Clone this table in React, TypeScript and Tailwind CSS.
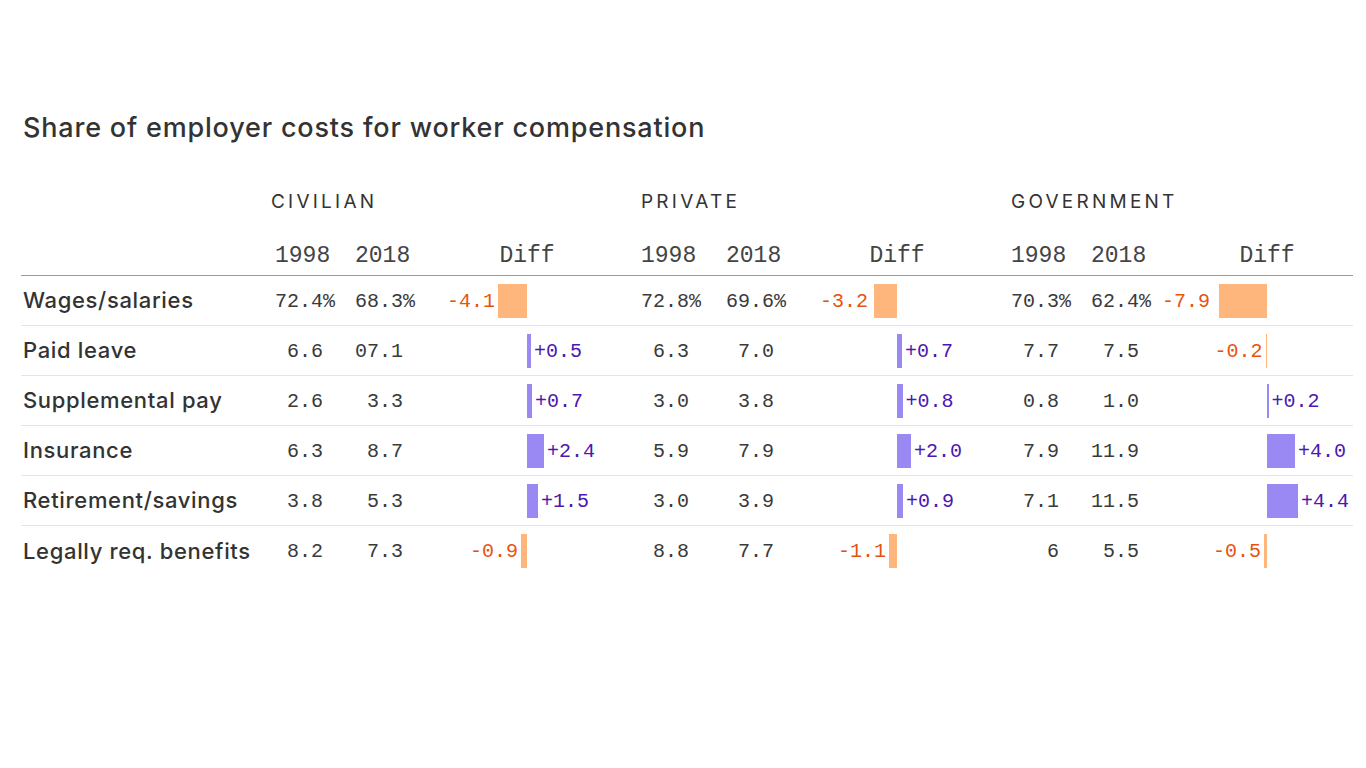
import React from 'react';

type Cell = { a: string; b: string; d: number; w: number; gap?: string };
type Row = { label: string; pct?: boolean; c: Cell; p: Cell; g: Cell };

const rows: Row[] = [
  {
    label: 'Wages/salaries',
    pct: true,
    c: { a: '72.4', b: '68.3', d: -4.1, w: 29 },
    p: { a: '72.8', b: '69.6', d: -3.2, w: 23, gap: 'mr-[3px]' },
    g: { a: '70.3', b: '62.4', d: -7.9, w: 48, gap: 'mr-[6px]' },
  },
  {
    label: 'Paid leave',
    c: { a: '6.6', b: '07.1', d: 0.5, w: 4 },
    p: { a: '6.3', b: '7.0', d: 0.7, w: 5 },
    g: { a: '7.7', b: '7.5', d: -0.2, w: 1.5 },
  },
  {
    label: 'Supplemental pay',
    c: { a: '2.6', b: '3.3', d: 0.7, w: 5 },
    p: { a: '3.0', b: '3.8', d: 0.8, w: 5.5 },
    g: { a: '0.8', b: '1.0', d: 0.2, w: 1.5 },
  },
  {
    label: 'Insurance',
    c: { a: '6.3', b: '8.7', d: 2.4, w: 17 },
    p: { a: '5.9', b: '7.9', d: 2.0, w: 14 },
    g: { a: '7.9', b: '11.9', d: 4.0, w: 28 },
  },
  {
    label: 'Retirement/savings',
    c: { a: '3.8', b: '5.3', d: 1.5, w: 11 },
    p: { a: '3.0', b: '3.9', d: 0.9, w: 6 },
    g: { a: '7.1', b: '11.5', d: 4.4, w: 31 },
  },
  {
    label: 'Legally req. benefits',
    c: { a: '8.2', b: '7.3', d: -0.9, w: 6 },
    p: { a: '8.8', b: '7.7', d: -1.1, w: 8 },
    g: { a: '6', b: '5.5', d: -0.5, w: 3 },
  },
];

// per-group column widths, written out so tailwind picks them up
const groups = [
  { key: 'c', name: 'CIVILIAN', wrap: 'w-[366px]', head: '-ml-1', colA: 'w-[80px]', colB: 'w-[80px]', neg: 'w-[92px]' },
  { key: 'p', name: 'PRIVATE', wrap: 'w-[370px]', head: '', colA: 'w-[85px]', colB: 'w-[85px]', neg: 'w-[86px]' },
  { key: 'g', name: 'GOVERNMENT', wrap: 'flex-1', head: '', colA: 'w-[80px]', colB: 'w-[80px]', neg: 'w-[96px]' },
] as const;

const mono = "font-['Liberation_Mono',monospace]";
const sans = "font-['Inter',sans-serif]";

const Num = ({ v, pct }: { v: string; pct?: boolean }) => (
  <div className="flex">
    <span className="w-[48px] text-right">{v}</span>
    {pct && <span>%</span>}
  </div>
);

const Diff = ({ cell, neg }: { cell: Cell; neg: string }) => {
  const { d, w } = cell;
  const label = (d > 0 ? '+' : '-') + Math.abs(d).toFixed(1);
  return (
    <div className="flex items-center">
      <div className={`${neg} flex shrink-0 items-center justify-end gap-[3px]`}>
        {d < 0 && (
          <>
            <span className={`shrink-0 pt-[2px] text-[#e6550d] ${cell.gap ?? ''}`}>{label}</span>
            <span className="h-[34px] shrink-0 bg-[#ffb67c]" style={{ width: w }} />
          </>
        )}
      </div>
      <div className="flex items-center gap-[3px]">
        {d > 0 && (
          <>
            <span className="h-[34px] shrink-0 bg-[#9b89f3]" style={{ width: w }} />
            <span className="shrink-0 pt-[2px] text-[#4c17b2]">{label}</span>
          </>
        )}
      </div>
    </div>
  );
};

export default function App() {
  return (
    <div className="min-h-[768px] w-[1366px] bg-white text-[#333]">
      <h1 className={`${sans} pl-[23px] pt-[111px] text-[27px] leading-[34px] font-medium tracking-[0.03em] text-[#333]`}>
        Share of employer costs for worker compensation
      </h1>

      <div className="ml-[21px] mt-[45px] w-[1332px]">
        {/* group names */}
        <div className="flex h-[24px] items-center">
          <div className="w-[254px]" />
          {groups.map((g) => (
            <div key={g.key} className={g.wrap}>
              <span className={`${sans} ${g.head} block pt-[1px] text-[19px] tracking-[0.17em] text-[#333]`}>{g.name}</span>
            </div>
          ))}
        </div>

        {/* year headers */}
        <div className={`${mono} mt-[26px] flex h-[36px] items-start border-b border-[#9a9a9a] pt-[1px] text-[23px] leading-[30px] text-[#444]`}>
          <div className="w-[254px]" />
          {groups.map((g) => (
            <div key={g.key} className={`${g.wrap} flex`}>
              <div className={g.colA}>1998</div>
              <div className={g.colB}>2018</div>
              <div className={`${g.neg} flex justify-end`}>
                <div className="-mr-[28px] w-[56px] text-center">Diff</div>
              </div>
            </div>
          ))}
        </div>

        {/* body rows */}
        {rows.map((r, i) => (
          <div
            key={r.label}
            className={`flex h-[50px] items-center ${i < rows.length - 1 ? 'border-b border-[#e4e4e4]' : ''}`}
          >
            <div className={`${sans} w-[254px] pl-[2px] text-[22px] font-medium tracking-[0.03em] text-[#333]`}>{r.label}</div>
            {groups.map((g) => {
              const cell = r[g.key];
              return (
                <div key={g.key} className={`${g.wrap} ${mono} flex items-center text-[20px] text-[#3a3a3a]`}>
                  <div className={`${g.colA} pt-[2px]`}>
                    <Num v={cell.a} pct={r.pct} />
                  </div>
                  <div className={`${g.colB} pt-[2px]`}>
                    <Num v={cell.b} pct={r.pct} />
                  </div>
                  <Diff cell={cell} neg={g.neg} />
                </div>
              );
            })}
          </div>
        ))}
      </div>
    </div>
  );
}
